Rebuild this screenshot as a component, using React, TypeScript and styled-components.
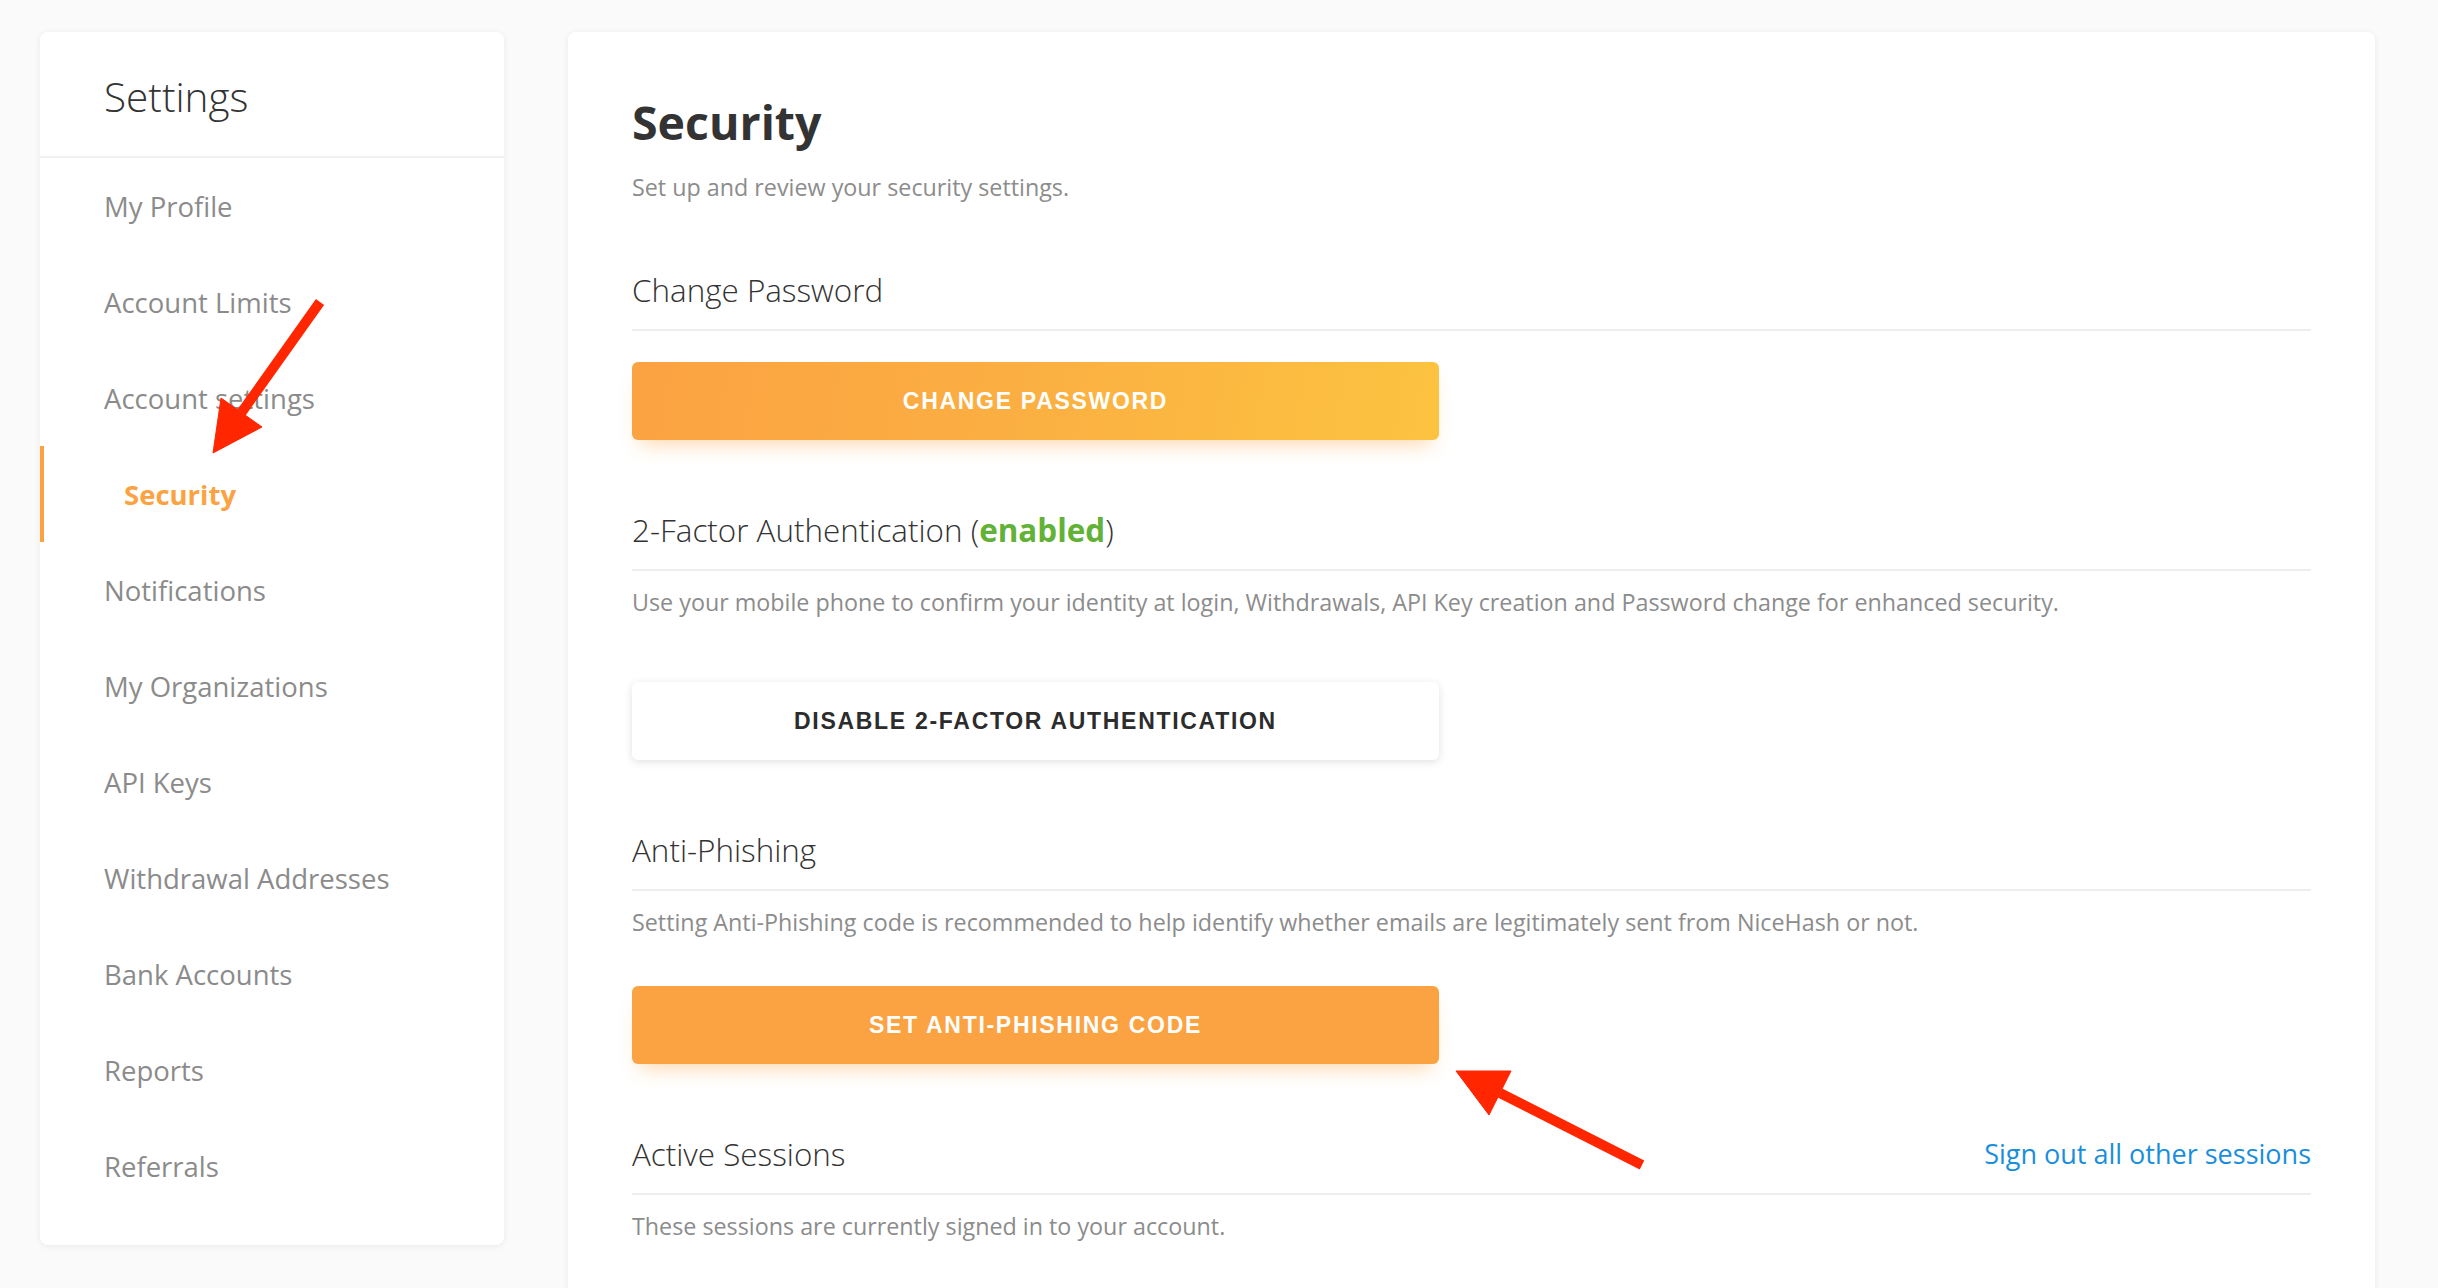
import React from "react";
import styled, { createGlobalStyle } from "styled-components";

const GlobalStyle = createGlobalStyle`
  html, body {
    margin: 0;
    padding: 0;
    background: #fafafa;
    overflow: hidden;
  }
  body {
    font-family: "Open Sans", "Noto Sans", sans-serif;
    color: #333;
  }
`;

const Page = styled.div`
  position: relative;
  display: grid;
  grid-template-columns: 464px 1fr;
  gap: 64px;
  align-items: start;
  padding: 32px 63px 0 40px;
  height: 1288px;
  box-sizing: border-box;
`;

const Card = styled.div`
  background: #fff;
  border-radius: 8px;
  box-shadow: 0 1px 6px rgba(0, 0, 0, 0.07);
`;

const Sidebar = styled(Card)`
  padding-bottom: 31px;
`;

const SidebarHeader = styled.div`
  height: 126px;
  box-sizing: border-box;
  padding: 40px 64px 0;
  border-bottom: 2px solid #f0f0f0;
  font-size: 40.5px;
  font-weight: 300;
  line-height: 50px;
  color: #333;
`;

const Menu = styled.ul`
  list-style: none;
  margin: 0;
  padding: 0;
`;

const MenuItem = styled.li<{ $active?: boolean }>`
  height: 96px;
  display: flex;
  align-items: center;
  box-sizing: border-box;
  padding-left: ${(p) => (p.$active ? "80px" : "60px")};
  border-left: 4px solid ${(p) => (p.$active ? "#fba342" : "transparent")};
  font-size: 27.5px;
  font-weight: ${(p) => (p.$active ? 700 : 400)};
  color: ${(p) => (p.$active ? "#fba342" : "#8b8b8b")};
`;

const Main = styled(Card)`
  padding: 60px 64px 120px;
  min-height: 1400px;
  box-sizing: border-box;
`;

const Title = styled.h1`
  margin: 0;
  font-size: 46.5px;
  line-height: 60px;
  font-weight: 700;
  color: #333;
`;

const Subtitle = styled.p`
  margin: 19px 0 0;
  font-size: 23.3px;
  line-height: 32px;
  color: #8c8c8c;
`;

const Section = styled.section<{ $first?: boolean }>`
  margin-top: ${(p) => (p.$first ? "63px" : "66px")};
`;

const SectionHeader = styled.div`
  display: flex;
  justify-content: space-between;
  align-items: center;
  padding-bottom: 15px;
  border-bottom: 2px solid #eeeeee;
  font-size: 31.4px;
  font-weight: 300;
  line-height: 48px;
  color: #333;
`;

const Enabled = styled.span`
  color: #62b238;
  font-weight: 700;
`;

const SignOut = styled.a`
  font-size: 27px;
  font-weight: 400;
  color: #1a8edb;
  text-decoration: none;
  cursor: pointer;
`;

const Description = styled.p<{ $gap?: number }>`
  margin: ${(p) => p.$gap ?? 16}px 0 0;
  font-size: 23.3px;
  line-height: 32px;
  color: #8c8c8c;
`;

const Button = styled.button<{ $variant: "gradient" | "solid" | "white"; $gap: number }>`
  display: block;
  width: 807px;
  height: 78px;
  margin-top: ${(p) => p.$gap}px;
  border: none;
  border-radius: 6px;
  font-family: "Liberation Sans", Arial, sans-serif;
  font-size: 23px;
  font-weight: 700;
  letter-spacing: 1.7px;
  text-transform: uppercase;
  cursor: pointer;
  color: ${(p) => (p.$variant === "white" ? "#2c2c2c" : "#fff")};
  background: ${(p) =>
    p.$variant === "gradient"
      ? "linear-gradient(100deg, #fba242 0%, #fbae42 45%, #fcc340 100%)"
      : p.$variant === "solid"
      ? "#fba342"
      : "#fff"};
  box-shadow: ${(p) =>
    p.$variant === "white"
      ? "0 2px 8px rgba(0, 0, 0, 0.12)"
      : "0 12px 20px -8px rgba(251, 163, 66, 0.45)"};
`;

const Overlay = styled.svg`
  position: absolute;
  left: 0;
  top: 0;
  pointer-events: none;
`;

const menu = [
  "My Profile",
  "Account Limits",
  "Account settings",
  "Security",
  "Notifications",
  "My Organizations",
  "API Keys",
  "Withdrawal Addresses",
  "Bank Accounts",
  "Reports",
  "Referrals",
];

const Arrow = ({ tail, tip, c1, c2 }: { tail: number[]; tip: number[]; c1: number[]; c2: number[] }) => {
  const mx = (c1[0] + c2[0]) / 2;
  const my = (c1[1] + c2[1]) / 2;
  return (
    <g fill="#ff2600" stroke="#ff2600">
      <line x1={tail[0]} y1={tail[1]} x2={mx} y2={my} strokeWidth={10} />
      <polygon points={`${tip[0]},${tip[1]} ${c1[0]},${c1[1]} ${c2[0]},${c2[1]}`} strokeWidth={1} />
    </g>
  );
};

export default function App() {
  return (
    <>
      <GlobalStyle />
      <Page>
        <Sidebar>
          <SidebarHeader>Settings</SidebarHeader>
          <Menu>
            {menu.map((m) => (
              <MenuItem key={m} $active={m === "Security"}>
                {m}
              </MenuItem>
            ))}
          </Menu>
        </Sidebar>

        <Main>
          <Title>Security</Title>
          <Subtitle>Set up and review your security settings.</Subtitle>

          <Section $first>
            <SectionHeader>Change Password</SectionHeader>
            <Button $variant="gradient" $gap={31}>Change Password</Button>
          </Section>

          <Section>
            <SectionHeader>
              <span>
                2-Factor Authentication (<Enabled>enabled</Enabled>)
              </span>
            </SectionHeader>
            <Description $gap={15}>
              Use your mobile phone to confirm your identity at login, Withdrawals, API Key creation and Password
              change for enhanced security.
            </Description>
            <Button $variant="white" $gap={64}>Disable 2-Factor Authentication</Button>
          </Section>

          <Section>
            <SectionHeader>Anti-Phishing</SectionHeader>
            <Description $gap={15}>
              Setting Anti-Phishing code is recommended to help identify whether emails are legitimately sent from
              NiceHash or not.
            </Description>
            <Button $variant="solid" $gap={48}>Set Anti-Phishing Code</Button>
          </Section>

          <Section>
            <SectionHeader>
              <span>Active Sessions</span>
              <SignOut>Sign out all other sessions</SignOut>
            </SectionHeader>
            <Description $gap={15}>These sessions are currently signed in to your account.</Description>
          </Section>
        </Main>

        <Overlay width={2438} height={1288} viewBox="0 0 2438 1288">
          <Arrow tail={[320, 302]} tip={[213, 453]} c1={[221, 398]} c2={[262, 427]} />
          <Arrow tail={[1642, 1165]} tip={[1456, 1071]} c1={[1511, 1071]} c2={[1489, 1115]} />
        </Overlay>
      </Page>
    </>
  );
}
